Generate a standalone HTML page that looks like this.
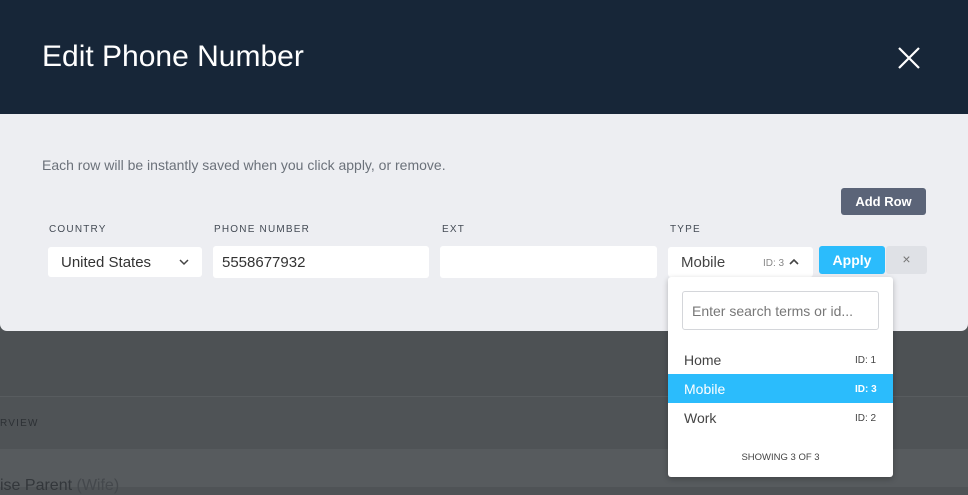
<!DOCTYPE html>
<html><head><style>
*{box-sizing:border-box;margin:0;padding:0}
body{width:968px;height:487px;overflow:hidden;font-family:"Liberation Sans",sans-serif;background:#4f5356;position:relative}
.abs{position:absolute}
.hdr{left:0;top:0;width:968px;height:114px;background:#172638}
.hdr h1{position:absolute;left:42px;top:40px;font-size:30px;font-weight:400;color:#fff}
.panel{left:0;top:114px;width:968px;height:217px;background:#edeef2;border-radius:0 0 7px 7px}
.lbl{font-size:10px;letter-spacing:1.2px;color:#444b55;top:224px}
.inp{background:#fff;border-radius:3px;font-size:15px;color:#333;padding-left:13px;line-height:31px}
</style></head><body>
<div class="abs" style="left:0;top:331px;width:968px;height:65px;background:#4d5154"></div>
<div class="abs" style="left:0;top:396px;width:968px;height:1px;background:#585c5f"></div>
<div class="abs" style="left:0;top:397px;width:968px;height:52px;background:#4f5356"></div>
<div class="abs" style="left:0;top:449px;width:968px;height:38px;background:#575b5e"></div>
<div class="abs" style="left:0;top:418px;font-size:10px;letter-spacing:1.2px;color:#2d3135">RVIEW</div>
<div class="abs" style="left:0;top:477px;font-size:16px;color:#33373b">ise Parent <span style="color:#44484c">(Wife)</span></div>
<div class="abs hdr"><h1>Edit Phone Number</h1>
<svg class="abs" style="left:898px;top:47px" width="22" height="22"><path d="M1 1L21 21M21 1L1 21" stroke="#fff" stroke-width="2.2"/></svg></div>
<div class="abs panel"></div>
<div class="abs" style="left:42px;top:157px;font-size:14px;color:#6b717a">Each row will be instantly saved when you click apply, or remove.</div>
<div class="abs" style="left:841px;top:188px;width:85px;height:27px;background:#5b6478;border-radius:3px;color:#fff;font-weight:bold;font-size:13px;text-align:center;line-height:27px">Add Row</div>
<div class="abs lbl" style="left:49px">COUNTRY</div>
<div class="abs lbl" style="left:214px">PHONE NUMBER</div>
<div class="abs lbl" style="left:442px">EXT</div>
<div class="abs lbl" style="left:670px">TYPE</div>
<div class="abs inp" style="left:48px;top:247px;width:154px;height:30px;line-height:31px">United States
<svg class="abs" style="left:131px;top:12px" width="10" height="7"><path d="M1 1L5 5L9 1" stroke="#444" stroke-width="1.5" fill="none"/></svg></div>
<div class="abs inp" style="left:213px;top:246px;width:216px;height:32px;padding-left:9px;line-height:33px">5558677932</div>
<div class="abs inp" style="left:440px;top:246px;width:217px;height:32px"></div>
<div class="abs inp" style="left:668px;top:247px;width:145px;height:30px;color:#444;line-height:31px">Mobile
<span class="abs" style="left:95px;top:1px;font-size:10px;color:#888">ID: 3</span>
<svg class="abs" style="left:121px;top:11px" width="10" height="7"><path d="M1 6L5 2L9 6" stroke="#444" stroke-width="1.6" fill="none"/></svg></div>
<div class="abs" style="left:819px;top:246px;width:66px;height:28px;background:#2bbcfc;border-radius:3px;color:#fff;font-weight:bold;font-size:14px;text-align:center;line-height:28px">Apply</div>
<div class="abs" style="left:886px;top:246px;width:41px;height:28px;background:#dfe1e6;border-radius:3px;color:#777;font-size:14px;text-align:center;line-height:27px">×</div>
<div class="abs" style="left:668px;top:277px;width:225px;height:200px;background:#fff;border-radius:3px;box-shadow:0 2px 6px rgba(0,0,0,.25)">
<div class="abs" style="left:14px;top:14px;width:197px;height:39px;border:1px solid #d4d6da;border-radius:3px;font-size:14px;color:#777;padding-left:9px;line-height:38px">Enter search terms or id...</div>
<div class="abs" style="left:16px;top:75px;font-size:14px;color:#444">Home</div>
<div class="abs" style="left:187px;top:78px;font-size:10px;color:#444">ID: 1</div>
<div class="abs" style="left:0;top:97px;width:225px;height:29px;background:#2bbcfc"></div>
<div class="abs" style="left:16px;top:104px;font-size:14px;color:#fff">Mobile</div>
<div class="abs" style="left:187px;top:107px;font-size:10px;color:#fff;font-weight:bold">ID: 3</div>
<div class="abs" style="left:16px;top:133px;font-size:14px;color:#444">Work</div>
<div class="abs" style="left:187px;top:136px;font-size:10px;color:#444">ID: 2</div>
<div class="abs" style="left:0;top:175px;width:225px;text-align:center;font-size:9.5px;color:#444">SHOWING 3 OF 3</div>
</div>
</body></html>
